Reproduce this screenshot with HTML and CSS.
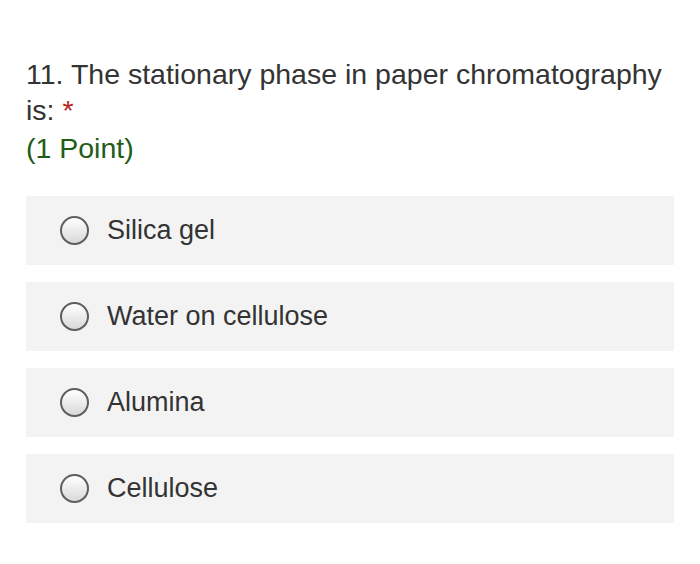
FILE: index.html
```html
<!DOCTYPE html>
<html lang="en">
<head>
<meta charset="utf-8">
<title>Question 11</title>
<link rel="stylesheet" href="styles.css">
</head>
<body>
<div class="question">
  <div class="title">11. The stationary phase in paper chromatography is: <span class="req">*</span></div>
  <div class="points">(1 Point)</div>
  <div class="options">
    <label class="option"><span class="radio"></span><span class="label">Silica gel</span></label>
    <label class="option"><span class="radio"></span><span class="label">Water on cellulose</span></label>
    <label class="option"><span class="radio"></span><span class="label">Alumina</span></label>
    <label class="option"><span class="radio"></span><span class="label">Cellulose</span></label>
  </div>
</div>
</body>
</html>
```
FILE: styles.css
```css
html, body {
  margin: 0;
  padding: 0;
  background: #ffffff;
}
body {
  font-family: "Liberation Sans", Arial, Helvetica, sans-serif;
  color: #333333;
}
.question {
  padding: 56px 26px 0 26px;
}
.title {
  font-size: 28.5px;
  line-height: 36px;
  width: 645px;
}
.req {
  color: #b3261e;
}
.points {
  margin-top: 2px;
  font-size: 28.5px;
  line-height: 36px;
  color: #1f5c17;
}
.options {
  margin-top: 30px;
  display: flex;
  flex-direction: column;
  gap: 17px;
}
.option {
  display: flex;
  align-items: center;
  height: 69px;
  background: #f3f3f3;
  padding-left: 34px;
}
.radio {
  width: 25px;
  height: 25px;
  border: 2px solid #5e5e5e;
  border-radius: 50%;
  background: linear-gradient(#ffffff, #d9d9d9);
  flex: none;
}
.label {
  margin-left: 18px;
  font-size: 27px;
  color: #333333;
}
```
